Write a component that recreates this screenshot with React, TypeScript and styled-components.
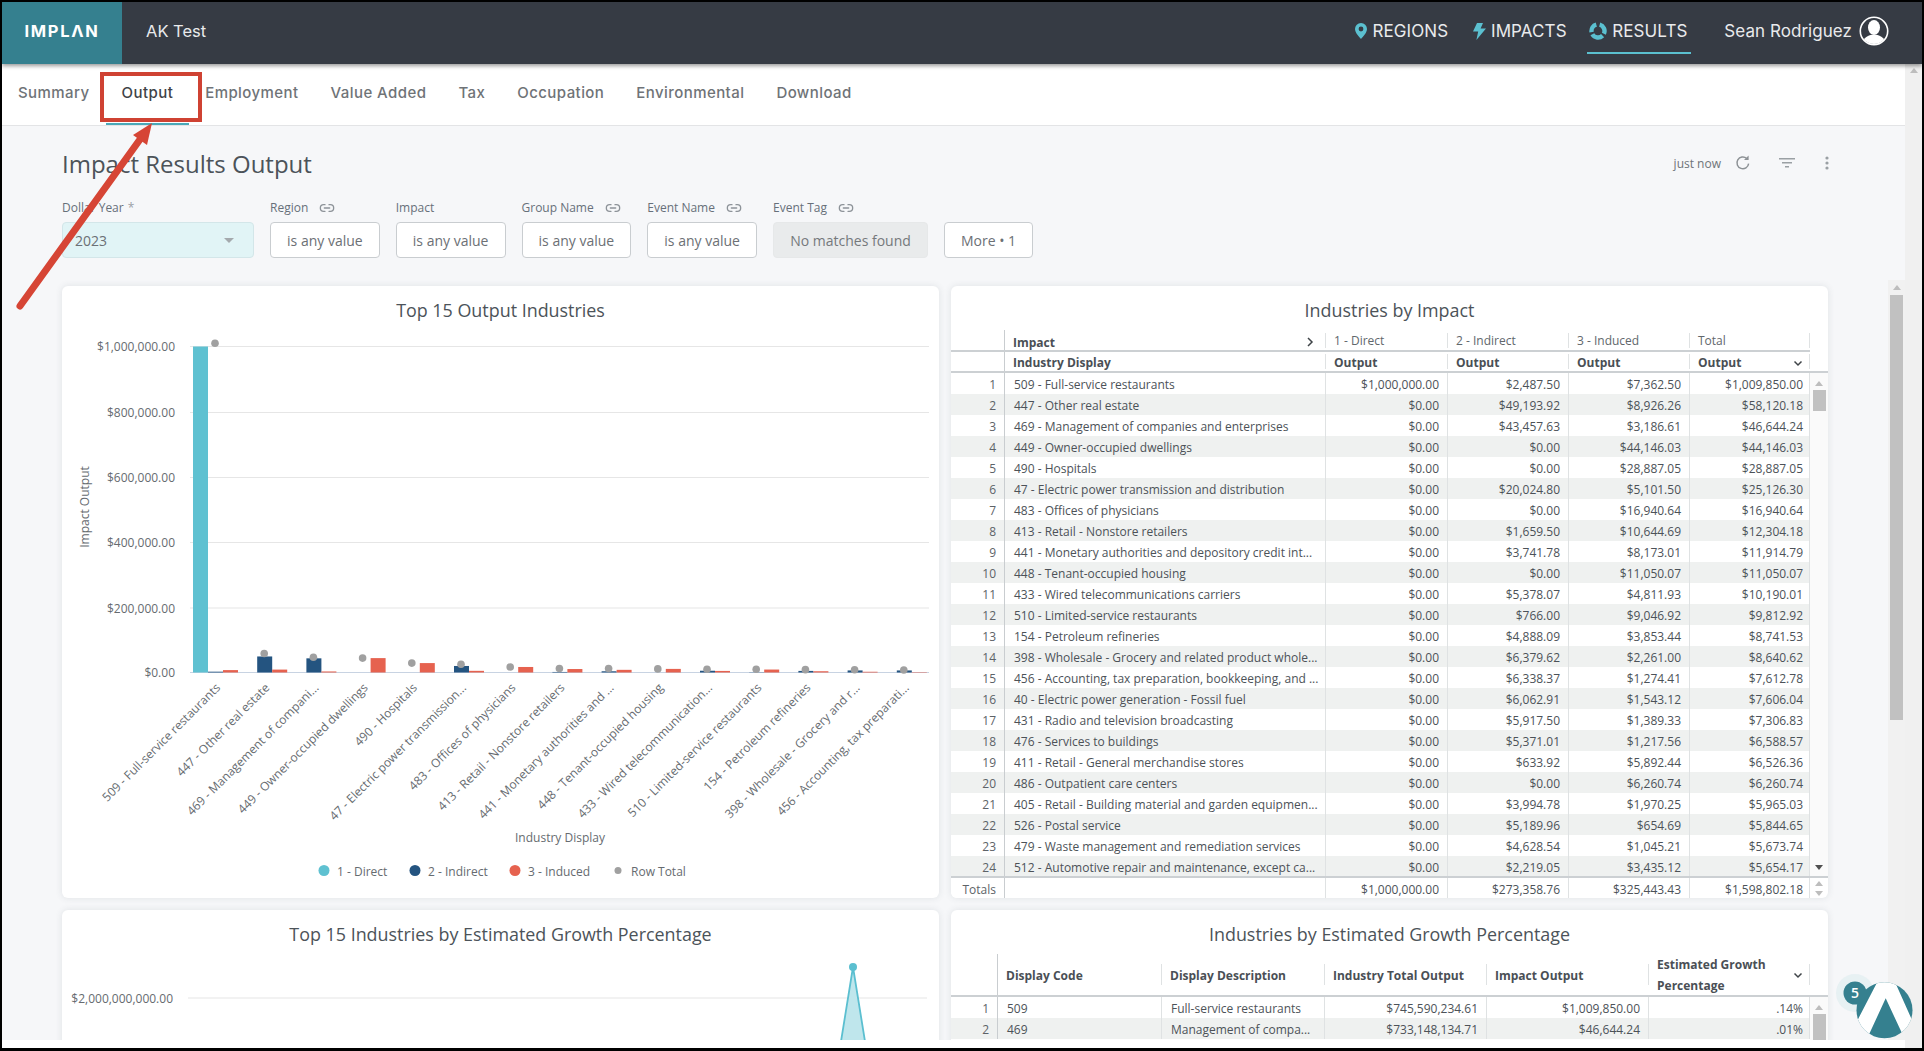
import React from "react";
import styled, { createGlobalStyle } from "styled-components";
import { Link2 } from "lucide-react";

const Global = createGlobalStyle`
  html, body { margin: 0; padding: 0; background: #000; overflow: hidden; }
  * { box-sizing: border-box; }
  body { font-family: "Open Sans", "Liberation Sans", sans-serif; }
`;

const Frame = styled.div`
  position: relative;
  width: 1924px;
  height: 1051px;
  padding: 2px 2px 3px 2px;
  background: #000;
  overflow: hidden;
  display: flex;
  flex-direction: column;
`;

const Header = styled.header`
  position: relative;
  z-index: 2;
  flex: none;
  height: 62px;
  display: flex;
  align-items: flex-start;
  background: #363b44;
  box-shadow: 0 2px 4px rgba(0, 0, 0, 0.4);
  font-family: Inter, "Open Sans", sans-serif;
  color: #e9eaec;
`;

const Logo = styled.div`
  width: 120px;
  height: 62px;
  background: #35808f;
  color: #fff;
  font-weight: 700;
  font-size: 16.5px;
  letter-spacing: 1.7px;
  display: flex;
  align-items: center;
  justify-content: center;
  padding-bottom: 4px;
`;

const Project = styled.div`
  margin-left: 24px;
  height: 58px;
  display: flex;
  align-items: center;
  font-size: 16.5px;
`;

const Nav = styled.nav`
  margin-left: auto;
  display: flex;
  gap: 17px;
`;

const NavItem = styled.div<{ $active?: boolean; $w: number }>`
  width: ${(p) => p.$w}px;
  height: 52px;
  padding-top: 8px;
  padding-right: 2px;
  display: flex;
  align-items: center;
  justify-content: center;
  gap: 5px;
  font-size: 17px;
  letter-spacing: 0.1px;
  white-space: nowrap;
  border-bottom: 2px solid ${(p) => (p.$active ? "#5bc0d0" : "transparent")};
`;

const User = styled.div`
  margin-left: 33px;
  margin-right: 33px;
  height: 58px;
  display: flex;
  align-items: center;
  gap: 7px;
  font-size: 17px;
  letter-spacing: 0.05px;
`;

const Workspace = styled.div`
  flex: 1;
  min-height: 0;
  display: flex;
`;

const Main = styled.div`
  width: 1903px;
  display: flex;
  flex-direction: column;
  background: #fff;
`;

const OuterScroll = styled.div`
  width: 17px;
  background: #f0f0f0;
  display: flex;
  justify-content: center;
  padding-top: 4px;
`;

const ArrowUp = styled.div<{ $c?: string }>`
  flex: none;
  width: 0;
  height: 0;
  border-left: 4px solid transparent;
  border-right: 4px solid transparent;
  border-bottom: 5px solid ${(p) => p.$c || "#bdbdbd"};
`;

const ArrowDown = styled.div<{ $c?: string }>`
  flex: none;
  width: 0;
  height: 0;
  border-left: 4px solid transparent;
  border-right: 4px solid transparent;
  border-top: 5px solid ${(p) => p.$c || "#505050"};
`;

const Tabs = styled.div`
  flex: none;
  height: 62px;
  display: flex;
  align-items: flex-start;
  background: #fff;
  border-bottom: 1px solid #e3e4e6;
  font-family: Inter, "Open Sans", sans-serif;
`;

const Tab = styled.div<{ $active?: boolean }>`
  height: 61px;
  padding: 0 16px 3px;
  display: flex;
  align-items: center;
  font-size: 15px;
  font-weight: 500;
  letter-spacing: 0.43px;
  color: ${(p) => (p.$active ? "#3f4347" : "#6f7377")};
  border-bottom: 2px solid ${(p) => (p.$active ? "#4aa8b8" : "transparent")};
`;

const Content = styled.div`
  flex: none;
  height: 914px;
  background: #f6f7f9;
  display: flex;
  flex-direction: column;
  overflow: hidden;
`;

const TitleRow = styled.div`
  margin-top: 21px;
  height: 32px;
  padding: 0 76px 0 60px;
  display: flex;
  align-items: center;
`;

const PageTitle = styled.h1`
  margin: 0;
  font-size: 24px;
  font-weight: 400;
  color: #4c5359;
`;

const Tools = styled.div`
  margin-left: auto;
  display: flex;
  align-items: center;
  font-size: 12px;
  color: #6e7478;
`;

const ToolIcon = styled.span<{ $ml: number }>`
  margin-left: ${(p) => p.$ml}px;
  display: flex;
`;

const Filters = styled.div`
  margin-top: 21px;
  padding-left: 60px;
  display: flex;
  align-items: flex-end;
  gap: 16px;
`;

const Filter = styled.div<{ $w: number }>`
  width: ${(p) => p.$w}px;
  display: flex;
  flex-direction: column;
  gap: 6px;
`;

const FilterLabel = styled.label`
  height: 16px;
  display: flex;
  align-items: center;
  gap: 11px;
  font-size: 12px;
  line-height: 16px;
  color: #67707a;
`;

const Star = styled.span`
  margin-left: -7px;
  color: #9aa0a6;
`;

const FilterBox = styled.div<{ $kind?: "year" | "off" }>`
  height: 36px;
  border-radius: 4px;
  border: 1px solid ${(p) => (p.$kind === "year" ? "#d3e6e9" : p.$kind === "off" ? "#e6e8e9" : "#c9cdd0")};
  background: ${(p) => (p.$kind === "year" ? "#e1f4f6" : p.$kind === "off" ? "#e9ebec" : "#fff")};
  color: ${(p) => (p.$kind === "off" ? "#75797c" : "#6c7075")};
  font-size: 14px;
  display: flex;
  align-items: center;
  justify-content: ${(p) => (p.$kind === "year" ? "space-between" : "center")};
  padding: ${(p) => (p.$kind === "year" ? "0 19px 0 12px" : "0")};
`;

const Caret = styled.span`
  width: 0;
  height: 0;
  border-left: 5px solid transparent;
  border-right: 5px solid transparent;
  border-top: 5px solid #a4a9ad;
`;

const Body = styled.div`
  margin-top: 22px;
  flex: 1;
  min-height: 0;
  display: flex;
  overflow: hidden;
`;

const CardsArea = styled.div`
  width: 1886px;
  padding: 6px 0 0 60px;
  display: grid;
  grid-template-columns: 877px 877px;
  grid-auto-rows: 612px;
  gap: 12px;
  overflow: hidden;
`;

const InnerTrack = styled.div`
  width: 17px;
  background: #f1f1f1;
  display: flex;
  flex-direction: column;
  align-items: center;
  padding-top: 5px;
`;

const PageThumb = styled.div`
  margin-top: 5px;
  width: 13px;
  height: 425px;
  background: #c1c1c1;
`;

const Card = styled.section`
  background: #fff;
  border-radius: 6px;
  box-shadow: 0 0 7px rgba(60, 70, 80, 0.12);
  overflow: hidden;
  display: flex;
  flex-direction: column;
`;

const CardTitle = styled.h2`
  margin: 0;
  flex: none;
  height: 44px;
  padding-top: 12px;
  font-size: 17.9px;
  line-height: 25px;
  font-weight: 400;
  text-align: center;
  color: #4c5359;
`;

const ChartSvg = styled.svg`
  display: block;
  flex: none;
  font-family: "Open Sans", sans-serif;
`;

const TableWrap = styled.div`
  flex: 1;
  min-height: 0;
  font-size: 12px;
  color: #4c5258;
  display: flex;
  flex-direction: column;
`;

const HeadRow = styled.div<{ $cols: string; $h: number; $line: "short" | "full" }>`
  flex: none;
  height: ${(p) => p.$h}px;
  display: grid;
  grid-template-columns: ${(p) => p.$cols};
  align-items: center;
  border-bottom: 2px solid #ccd0d3;
  margin-right: ${(p) => (p.$line === "short" ? 18 : 0)}px;
`;

const Gutter = styled.div`
  align-self: stretch;
  border-right: 1px solid #c9cdd0;
`;

const HeadCell = styled.div<{ $bold?: boolean; $tall?: number; $pt?: number }>`
  height: ${(p) => p.$tall || 15}px;
  display: flex;
  align-items: center;
  justify-content: space-between;
  padding: ${(p) => p.$pt ?? (p.$bold ? 2 : 0)}px 6px 0 8px;
  border-right: 1px solid #dfe2e3;
  font-weight: ${(p) => (p.$bold ? 700 : 400)};
  line-height: ${(p) => (p.$tall ? "21px" : "15px")};
  white-space: nowrap;
  color: ${(p) => (p.$bold ? "#4a4f55" : "#61676c")};
`;

const BodyWrap = styled.div`
  flex: 1;
  min-height: 0;
  display: flex;
  overflow: hidden;
`;

const Rows = styled.div`
  flex: 1;
  overflow: hidden;
`;

const Row = styled.div<{ $cols: string; $alt?: boolean }>`
  height: 21px;
  display: grid;
  grid-template-columns: ${(p) => p.$cols};
  background: ${(p) => (p.$alt ? "#eff1f0" : "#fff")};
  line-height: 24px;
`;

const Cell = styled.div<{ $num?: boolean; $pr?: number }>`
  padding: ${(p) => (p.$num ? `0 ${p.$pr ?? 8}px 0 0` : "0 6px 0 9px")};
  text-align: ${(p) => (p.$num ? "right" : "left")};
  border-right: 1px solid #dfe2e3;
  white-space: nowrap;
  overflow: hidden;
`;

const Index = styled(Cell)`
  padding: 0 8px 0 0;
  text-align: right;
  border-right-color: #c9cdd0;
  color: #5d6368;
`;

const TableScroll = styled.div`
  width: 18px;
  flex: none;
  background: #fafafa;
  display: flex;
  flex-direction: column;
  align-items: center;
  padding-top: 8px;
`;

const TableThumb = styled.div<{ $h: number }>`
  margin-top: 4px;
  width: 13px;
  height: ${(p) => p.$h}px;
  background: #c1c1c1;
`;

const Spacer = styled.div`
  flex: 1;
`;

const ScrollEnd = styled.div`
  height: 6px;
`;

const TotalsRow = styled.div`
  flex: none;
  height: 22px;
  display: flex;
  border-top: 2px solid #ccd0d3;
`;

const Spinner = styled.div`
  width: 18px;
  display: flex;
  flex-direction: column;
  align-items: center;
  justify-content: center;
  gap: 5px;
`;

const ChevronSlot = styled.span`
  display: flex;
  margin-right: 4px;
`;

const Annotation = styled.svg`
  position: absolute;
  left: 0;
  top: 0;
  pointer-events: none;
  z-index: 5;
`;

const Highlight = styled.div`
  position: absolute;
  left: 100px;
  top: 72px;
  width: 102px;
  height: 50px;
  border: 4px solid #cf4233;
  z-index: 6;
`;

const Widget = styled.svg`
  position: absolute;
  left: 1830px;
  top: 966px;
  z-index: 7;
  font-family: "Open Sans", sans-serif;
`;

type Rec = [string, string, string, string, string];
const rows: Rec[] = [
  ["509 - Full-service restaurants", "$1,000,000.00", "$2,487.50", "$7,362.50", "$1,009,850.00"],
  ["447 - Other real estate", "$0.00", "$49,193.92", "$8,926.26", "$58,120.18"],
  ["469 - Management of companies and enterprises", "$0.00", "$43,457.63", "$3,186.61", "$46,644.24"],
  ["449 - Owner-occupied dwellings", "$0.00", "$0.00", "$44,146.03", "$44,146.03"],
  ["490 - Hospitals", "$0.00", "$0.00", "$28,887.05", "$28,887.05"],
  ["47 - Electric power transmission and distribution", "$0.00", "$20,024.80", "$5,101.50", "$25,126.30"],
  ["483 - Offices of physicians", "$0.00", "$0.00", "$16,940.64", "$16,940.64"],
  ["413 - Retail - Nonstore retailers", "$0.00", "$1,659.50", "$10,644.69", "$12,304.18"],
  ["441 - Monetary authorities and depository credit int...", "$0.00", "$3,741.78", "$8,173.01", "$11,914.79"],
  ["448 - Tenant-occupied housing", "$0.00", "$0.00", "$11,050.07", "$11,050.07"],
  ["433 - Wired telecommunications carriers", "$0.00", "$5,378.07", "$4,811.93", "$10,190.01"],
  ["510 - Limited-service restaurants", "$0.00", "$766.00", "$9,046.92", "$9,812.92"],
  ["154 - Petroleum refineries", "$0.00", "$4,888.09", "$3,853.44", "$8,741.53"],
  ["398 - Wholesale - Grocery and related product whole...", "$0.00", "$6,379.62", "$2,261.00", "$8,640.62"],
  ["456 - Accounting, tax preparation, bookkeeping, and ...", "$0.00", "$6,338.37", "$1,274.41", "$7,612.78"],
  ["40 - Electric power generation - Fossil fuel", "$0.00", "$6,062.91", "$1,543.12", "$7,606.04"],
  ["431 - Radio and television broadcasting", "$0.00", "$5,917.50", "$1,389.33", "$7,306.83"],
  ["476 - Services to buildings", "$0.00", "$5,371.01", "$1,217.56", "$6,588.57"],
  ["411 - Retail - General merchandise stores", "$0.00", "$633.92", "$5,892.44", "$6,526.36"],
  ["486 - Outpatient care centers", "$0.00", "$0.00", "$6,260.74", "$6,260.74"],
  ["405 - Retail - Building material and garden equipmen...", "$0.00", "$3,994.78", "$1,970.25", "$5,965.03"],
  ["526 - Postal service", "$0.00", "$5,189.96", "$654.69", "$5,844.65"],
  ["479 - Waste management and remediation services", "$0.00", "$4,628.54", "$1,045.21", "$5,673.74"],
  ["512 - Automotive repair and maintenance, except ca...", "$0.00", "$2,219.05", "$3,435.12", "$5,654.17"],
];

const axisLabels = [
  "509 - Full-service restaurants",
  "447 - Other real estate",
  "469 - Management of compani...",
  "449 - Owner-occupied dwellings",
  "490 - Hospitals",
  "47 - Electric power transmission...",
  "483 - Offices of physicians",
  "413 - Retail - Nonstore retailers",
  "441 - Monetary authorities and ...",
  "448 - Tenant-occupied housing",
  "433 - Wired telecommunication...",
  "510 - Limited-service restaurants",
  "154 - Petroleum refineries",
  "398 - Wholesale - Grocery and r...",
  "456 - Accounting, tax preparati...",
];

const money = (s: string) => parseFloat(s.replace(/[$,]/g, ""));
const Y0 = 672.5;
const yOf = (v: number) => Y0 - (v / 1000000) * 326;
const yTicks: [string, number][] = [
  ["$1,000,000.00", 346.5],
  ["$800,000.00", 412.5],
  ["$600,000.00", 477.5],
  ["$400,000.00", 542.5],
  ["$200,000.00", 608],
  ["$0.00", 672.5],
];

const C = { cyan: "#5fc1d1", navy: "#245480", coral: "#e6624f", grey: "#a0a0a0", axis: "#666b70" };

const PinIcon = () => (
  <svg width="12" height="16" viewBox="0 0 12 16">
    <path fillRule="evenodd" fill="#5bc0d0" d="M6 0a6 6 0 0 1 6 6c0 3.6-4 7.8-6 10C4 13.8 0 9.6 0 6a6 6 0 0 1 6-6zm0 3.6a2.4 2.4 0 1 0 0 4.8 2.4 2.4 0 0 0 0-4.8z" />
  </svg>
);
const BoltIcon = () => (
  <svg width="13" height="17" viewBox="0 0 13 17">
    <path fill="#5bc0d0" d="M4 0h6L7.6 5.6H13L3.4 17l1.8-8.6H0z" />
  </svg>
);
const ResultsIcon = () => (
  <svg width="18" height="18" viewBox="0 0 18 18">
    <g fill="none" stroke="#5bc0d0" strokeWidth="4.4">
      <path d="M10.68 2.72A6.5 6.5 0 0 1 14.89 11.75" />
      <path d="M13.6 13.6A6.5 6.5 0 0 1 3.37 12.25" />
      <path d="M2.6 10.13A6.5 6.5 0 0 1 7.32 2.72" />
    </g>
  </svg>
);
const AvatarIcon = () => (
  <svg width="30" height="30" viewBox="0 0 30 30">
    <defs>
      <clipPath id="av">
        <circle cx="15" cy="15" r="13" />
      </clipPath>
    </defs>
    <circle cx="15" cy="15" r="13.7" fill="#363b44" stroke="#fff" strokeWidth="1.6" />
    <g clipPath="url(#av)" fill="#fff">
      <ellipse cx="15" cy="11.5" rx="6" ry="7.5" />
      <path d="M3 30c0-7 4-9.5 8.5-11h7c4.5 1.5 8.5 4 8.5 11z" />
    </g>
  </svg>
);
const RefreshIcon = () => (
  <svg width="18" height="18" viewBox="0 0 16 16" fill="none" stroke="#8d9296" strokeWidth="1.3">
    <path d="M13 8.5A5.2 5.2 0 1 1 11.3 4" />
    <path d="M13 1.3v4.1H8.9z" fill="#8d9296" stroke="none" />
  </svg>
);
const FilterIcon = () => (
  <svg width="16" height="12" viewBox="0 0 16 12" fill="#9aa0a4">
    <rect x="0" y="1" width="16" height="1.5" />
    <rect x="3" y="5" width="10" height="1.5" />
    <rect x="6" y="9" width="4" height="1.5" />
  </svg>
);
const DotsIcon = () => (
  <svg width="4" height="14" viewBox="0 0 4 14" fill="#9aa0a4">
    <circle cx="2" cy="2" r="1.6" />
    <circle cx="2" cy="7" r="1.6" />
    <circle cx="2" cy="12" r="1.6" />
  </svg>
);
const Chevron = ({ dir }: { dir: "right" | "down" }) => (
  <svg width="10" height="10" viewBox="0 0 10 10" fill="none" stroke="#3f4448" strokeWidth="1.5">
    <path d={dir === "right" ? "M3 1l4 4-4 4" : "M1.5 3.5L5 7l3.5-3.5"} />
  </svg>
);

const BarChart = () => {
  const xs = axisLabels.map((_, i) => 215 + i * 49.2);
  return (
    <ChartSvg width={877} height={568} viewBox="62 330 877 568">
      {yTicks.map(([t, y]) => (
        <g key={t}>
          <line x1={190} x2={929} y1={y} y2={y} stroke={y === Y0 ? "#c8d3e2" : "#e6e6e6"} strokeWidth={1.2} />
          <text x={175} y={y + 4.5} textAnchor="end" fontSize={12} fill={C.axis}>
            {t}
          </text>
        </g>
      ))}
      <text transform="translate(89 507) rotate(-90)" textAnchor="middle" fontSize={12} fill={C.axis}>
        Impact Output
      </text>
      {xs.map((x, i) => {
        const r = rows[i];
        const vals = [money(r[1]), money(r[2]), money(r[3])];
        const cols = [C.cyan, C.navy, C.coral];
        return (
          <g key={i}>
            {vals.map((v, j) =>
              v > 0 ? <rect key={j} x={x - 22 + j * 15} y={yOf(v)} width={15} height={Y0 - yOf(v)} fill={cols[j]} /> : null
            )}
            <circle cx={x} cy={yOf(money(r[4]))} r={3.8} fill={C.grey} />
            <text
              transform={`translate(${x + 6} 688.5) rotate(-45)`}
              textAnchor="end"
              fontSize={12}
              fill={C.axis}
            >
              {axisLabels[i]}
            </text>
          </g>
        );
      })}
      <text x={560} y={842} textAnchor="middle" fontSize={12} fill={C.axis}>
        Industry Display
      </text>
      <circle cx={324} cy={870.5} r={5.5} fill={C.cyan} />
      <text x={337} y={875.5} fontSize={12} fill={C.axis}>1 - Direct</text>
      <circle cx={415} cy={870.5} r={5.5} fill={C.navy} />
      <text x={428} y={875.5} fontSize={12} fill={C.axis}>2 - Indirect</text>
      <circle cx={515} cy={870.5} r={5.5} fill={C.coral} />
      <text x={528} y={875.5} fontSize={12} fill={C.axis}>3 - Induced</text>
      <circle cx={618} cy={870.5} r={3.5} fill={C.grey} />
      <text x={631} y={875.5} fontSize={12} fill={C.axis}>Row Total</text>
    </ChartSvg>
  );
};

const GrowthChart = () => (
  <ChartSvg width={877} height={110} viewBox="62 954 877 110">
    <line x1={188} x2={927} y1={998} y2={998} stroke="#e6e6e6" strokeWidth={1.2} />
    <text x={173} y={1002.5} textAnchor="end" fontSize={12} fill={C.axis}>$2,000,000,000.00</text>
    <path d="M853 967L838 1060H868z" fill="#bfe6ec" stroke="#5bbfd0" strokeWidth={1.8} />
    <circle cx={853} cy={967} r={4} fill="#5bbfd0" />
  </ChartSvg>
);

const cols1 = "54px 321px 122px 121px 121px 120px";
const cols1full = "54px 321px 122px 121px 121px 120px 18px";
const cols2 = "47px 164px 163px 162px 162px 161px";
const cols2full = "47px 164px 163px 162px 162px 161px 18px";

const ImpactTable = () => (
  <TableWrap>
    <HeadRow $cols={cols1} $h={22} $line="short">
      <Gutter />
      <HeadCell $bold $pt={4}>
        Impact
        <ChevronSlot>
          <Chevron dir="right" />
        </ChevronSlot>
      </HeadCell>
      <HeadCell>1 - Direct</HeadCell>
      <HeadCell>2 - Indirect</HeadCell>
      <HeadCell>3 - Induced</HeadCell>
      <HeadCell>Total</HeadCell>
    </HeadRow>
    <HeadRow $cols={cols1full} $h={21} $line="full">
      <Gutter />
      <HeadCell $bold>Industry Display</HeadCell>
      <HeadCell $bold>Output</HeadCell>
      <HeadCell $bold>Output</HeadCell>
      <HeadCell $bold>Output</HeadCell>
      <HeadCell $bold>
        Output <Chevron dir="down" />
      </HeadCell>
    </HeadRow>
    <BodyWrap>
      <Rows>
        {rows.map((r, i) => (
          <Row key={i} $cols={cols1} $alt={i % 2 === 1}>
            <Index>{i + 1}</Index>
            <Cell>{r[0]}</Cell>
            <Cell $num>{r[1]}</Cell>
            <Cell $num>{r[2]}</Cell>
            <Cell $num>{r[3]}</Cell>
            <Cell $num $pr={6}>{r[4]}</Cell>
          </Row>
        ))}
      </Rows>
      <TableScroll>
        <ArrowUp />
        <TableThumb $h={21} />
        <Spacer />
        <ArrowDown />
        <ScrollEnd />
      </TableScroll>
    </BodyWrap>
    <TotalsRow>
      <Row $cols={cols1}>
        <Index>Totals</Index>
        <Cell />
        <Cell $num>$1,000,000.00</Cell>
        <Cell $num>$273,358.76</Cell>
        <Cell $num>$325,443.43</Cell>
        <Cell $num $pr={6}>$1,598,802.18</Cell>
      </Row>
      <Spinner>
        <ArrowUp />
        <ArrowDown $c="#bdbdbd" />
      </Spinner>
    </TotalsRow>
  </TableWrap>
);

const GrowthTable = () => (
  <TableWrap>
    <HeadRow $cols={cols2full} $h={43} $line="full">
      <Gutter />
      <HeadCell $bold $tall={21}>Display Code</HeadCell>
      <HeadCell $bold $tall={21}>Display Description</HeadCell>
      <HeadCell $bold $tall={21}>Industry Total Output</HeadCell>
      <HeadCell $bold $tall={21}>Impact Output</HeadCell>
      <HeadCell $bold $tall={21} $pt={0}>
        <span>
          Estimated Growth
          <br />
          Percentage
        </span>
        <Chevron dir="down" />
      </HeadCell>
    </HeadRow>
    <BodyWrap>
      <Rows>
        <Row $cols={cols2}>
          <Index>1</Index>
          <Cell>509</Cell>
          <Cell>Full-service restaurants</Cell>
          <Cell $num>$745,590,234.61</Cell>
          <Cell $num>$1,009,850.00</Cell>
          <Cell $num $pr={6}>.14%</Cell>
        </Row>
        <Row $cols={cols2} $alt>
          <Index>2</Index>
          <Cell>469</Cell>
          <Cell>Management of compa...</Cell>
          <Cell $num>$733,148,134.71</Cell>
          <Cell $num>$46,644.24</Cell>
          <Cell $num $pr={6}>.01%</Cell>
        </Row>
      </Rows>
      <TableScroll>
        <ArrowUp />
        <TableThumb $h={40} />
      </TableScroll>
    </BodyWrap>
  </TableWrap>
);

export default function App() {
  const tabs = ["Summary", "Output", "Employment", "Value Added", "Tax", "Occupation", "Environmental", "Download"];
  return (
    <Frame>
      <Global />
      <Header>
        <Logo>IMPLΛN</Logo>
        <Project>AK Test</Project>
        <Nav>
          <NavItem $w={103}>
            <PinIcon />
            REGIONS
          </NavItem>
          <NavItem $w={99}>
            <BoltIcon />
            IMPACTS
          </NavItem>
          <NavItem $w={104} $active>
            <ResultsIcon />
            RESULTS
          </NavItem>
        </Nav>
        <User>
          Sean Rodriguez
          <AvatarIcon />
        </User>
      </Header>
      <Workspace>
        <Main>
          <Tabs>
            {tabs.map((t) => (
              <Tab key={t} $active={t === "Output"}>
                {t}
              </Tab>
            ))}
          </Tabs>
          <Content>
            <TitleRow>
              <PageTitle>Impact Results Output</PageTitle>
              <Tools>
                just now
                <ToolIcon $ml={13}><RefreshIcon /></ToolIcon>
                <ToolIcon $ml={27}><FilterIcon /></ToolIcon>
                <ToolIcon $ml={30}><DotsIcon /></ToolIcon>
              </Tools>
            </TitleRow>
            <Filters>
              <Filter $w={192}>
                <FilterLabel>
                  Dollar Year <Star>*</Star>
                </FilterLabel>
                <FilterBox $kind="year">
                  2023 <Caret />
                </FilterBox>
              </Filter>
              {["Region", "Impact", "Group Name", "Event Name"].map((n) => (
                <Filter key={n} $w={109.75}>
                  <FilterLabel>
                    {n}
                    {n !== "Impact" && <Link2 size={16} color="#8d9399" />}
                  </FilterLabel>
                  <FilterBox>is any value</FilterBox>
                </Filter>
              ))}
              <Filter $w={155}>
                <FilterLabel>
                  Event Tag
                  <Link2 size={16} color="#8d9399" />
                </FilterLabel>
                <FilterBox $kind="off">No matches found</FilterBox>
              </Filter>
              <Filter $w={89}>
                <FilterBox>More • 1</FilterBox>
              </Filter>
            </Filters>
            <Body>
              <CardsArea>
                <Card>
                  <CardTitle>Top 15 Output Industries</CardTitle>
                  <BarChart />
                </Card>
                <Card>
                  <CardTitle>Industries by Impact</CardTitle>
                  <ImpactTable />
                </Card>
                <Card>
                  <CardTitle>Top 15 Industries by Estimated Growth Percentage</CardTitle>
                  <GrowthChart />
                </Card>
                <Card>
                  <CardTitle>Industries by Estimated Growth Percentage</CardTitle>
                  <GrowthTable />
                </Card>
              </CardsArea>
              <InnerTrack>
                <ArrowUp />
                <PageThumb />
              </InnerTrack>
            </Body>
          </Content>
        </Main>
        <OuterScroll>
          <ArrowUp />
        </OuterScroll>
      </Workspace>
      <Highlight />
      <Annotation width={1924} height={1051} viewBox="0 0 1924 1051">
        <line x1={20} y1={306} x2={141} y2={138} stroke="#d64535" strokeWidth={7} strokeLinecap="round" />
        <path d="M152 123L133 135L147 145z" fill="#d64535" />
      </Annotation>
      <Widget width={90} height={80} viewBox="1830 966 90 80">
        <defs>
          <clipPath id="wg">
            <circle cx={1884.5} cy={1010.3} r={28} />
          </clipPath>
        </defs>
        <circle cx={1855} cy={993} r={19} fill="#e3eff1" opacity={0.8} />
        <circle cx={1884.5} cy={1010.3} r={28} fill="#35808f" />
        <path
          clipPath="url(#wg)"
          fill="#fff"
          d="M1877.3 982L1853.3 1028.3L1868.3 1036L1885.7 998.3L1903.3 1036L1915 1026.7L1895 982z"
        />
        <circle cx={1855} cy={993} r={11.5} fill="#35808f" />
        <text x={1855} y={998} textAnchor="middle" fontSize={14} fontWeight={600} fill="#fff">5</text>
      </Widget>
    </Frame>
  );
}
